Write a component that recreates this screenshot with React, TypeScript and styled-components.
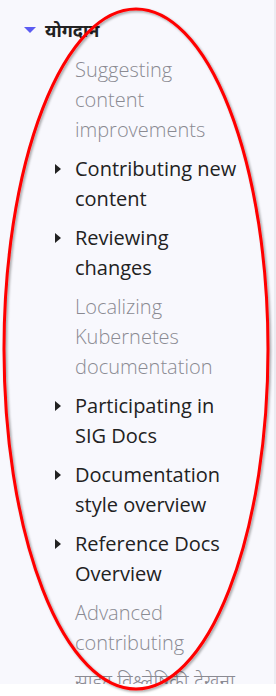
import React from "react";
import styled, { createGlobalStyle } from "styled-components";

const Global = createGlobalStyle`
  html, body { margin: 0; padding: 0; background: #ffffff; }
  body { font-family: "Open Sans", "Noto Sans", sans-serif; }
`;

const Frame = styled.div`
  position: relative;
  width: 276px;
  height: 696px;
  overflow: hidden;
  background: #ffffff;
`;

const Sidebar = styled.nav`
  height: 684px;
  overflow: hidden;
  background: #f8f8fd;
  border-right: 2px solid #ececf2;
  box-sizing: border-box;
  padding: 15px 32px 0 24px;
`;

const Heading = styled.div`
  display: flex;
  align-items: center;
  gap: 9px;
  height: 30px;
  font-family: "Noto Sans", "Open Sans", sans-serif;
  font-size: 18px;
  font-weight: 700;
  color: #222222;
`;

const Caret = styled.span<{ $dir: "down" | "right"; $color: string }>`
  display: block;
  width: 0;
  height: 0;
  flex: none;
  ${(p) =>
    p.$dir === "down"
      ? `border-left: 6px solid transparent; border-right: 6px solid transparent; border-top: 6px solid ${p.$color};`
      : `border-top: 5px solid transparent; border-bottom: 5px solid transparent; border-left: 6px solid ${p.$color};`}
`;

const List = styled.ul`
  list-style: none;
  margin: 10px 0 0 0;
  padding: 0 0 0 31px;
  display: flex;
  flex-direction: column;
  gap: 9px;
`;

const Item = styled.li<{ $muted: boolean }>`
  position: relative;
  padding-left: 20px;
  font-size: 20px;
  line-height: 30px;
  font-weight: ${(p) => (p.$muted ? 300 : 400)};
  color: ${(p) => (p.$muted ? "#8a8a92" : "#222222")};
  font-family: "Open Sans", "Noto Sans", sans-serif;
`;

const ItemCaret = styled.span`
  position: absolute;
  left: 0;
  top: 0;
  height: 30px;
  display: flex;
  align-items: center;
`;

const Overlay = styled.svg`
  position: absolute;
  left: 0;
  top: 0;
  pointer-events: none;
`;

const items: { text: string; muted: boolean }[] = [
  { text: "Suggesting content improvements", muted: true },
  { text: "Contributing new content", muted: false },
  { text: "Reviewing changes", muted: false },
  { text: "Localizing Kubernetes documentation", muted: true },
  { text: "Participating in SIG Docs", muted: false },
  { text: "Documentation style overview", muted: false },
  { text: "Reference Docs Overview", muted: false },
  { text: "Advanced contributing", muted: true },
  { text: "साइट विश्लेषिकी देखना", muted: true },
];

export default function App() {
  return (
    <>
      <Global />
      <Frame>
        <Sidebar>
          <Heading>
            <Caret $dir="down" $color="#5b5bf2" />
            <span>योगदान</span>
          </Heading>
          <List>
            {items.map((it) => (
              <Item key={it.text} $muted={it.muted}>
                {!it.muted && (
                  <ItemCaret>
                    <Caret $dir="right" $color="#222222" />
                  </ItemCaret>
                )}
                {it.text}
              </Item>
            ))}
          </List>
        </Sidebar>
        <Overlay width="276" height="696" viewBox="0 0 276 696">
          <defs>
            <filter id="sh" x="-10%" y="-10%" width="120%" height="120%">
              <feDropShadow dx="1.5" dy="1.5" stdDeviation="1" floodColor="#000" floodOpacity="0.35" />
            </filter>
          </defs>
          <ellipse cx="136" cy="349" rx="132" ry="340" fill="none" stroke="#ff0000" strokeWidth="3" filter="url(#sh)" />
        </Overlay>
      </Frame>
    </>
  );
}
